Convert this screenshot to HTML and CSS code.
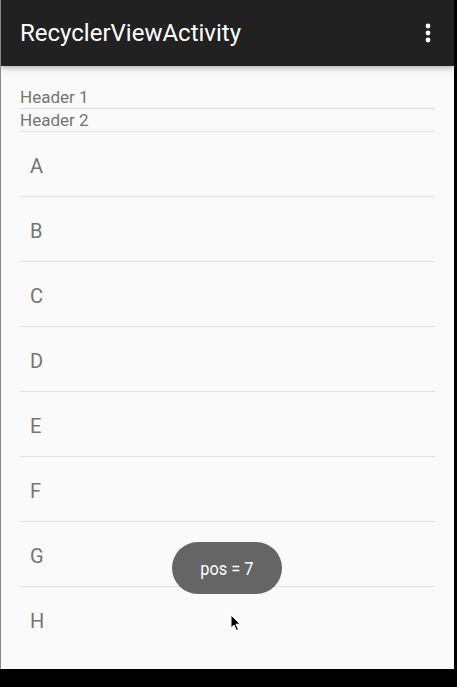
FILE: index.html
```html
<!DOCTYPE html>
<html>
<head>
  <title>RecyclerViewActivity</title>
  <link rel="stylesheet" href="styles.css">
</head>
<body>

  <div class="screen">
    <!-- ACTION BAR -->
    <div class="toolbar">
      <span class="title">RecyclerViewActivity</span>
      <svg class="overflow" width="8" height="22" viewBox="0 0 8 22">
        <circle cx="4" cy="4" r="2.4" fill="#fff"/>
        <circle cx="4" cy="11" r="2.4" fill="#fff"/>
        <circle cx="4" cy="18" r="2.4" fill="#fff"/>
      </svg>
    </div>

    <!-- LIST -->
    <div class="list">
      <div class="header">Header 1</div>
      <div class="header last">Header 2</div>
      <div class="item">A</div>
      <div class="item">B</div>
      <div class="item">C</div>
      <div class="item">D</div>
      <div class="item">E</div>
      <div class="item">F</div>
      <div class="item">G</div>
      <div class="item">H</div>
    </div>

    <div class="toast"><span>pos = 7</span></div>

    <svg class="cursor" width="12" height="18" viewBox="0 0 12 18">
      <path d="M1 1 L1 14 L4 11 L6.5 16.5 L8.5 15.6 L6 10.2 L10.3 10.2 Z" fill="#000" stroke="#fff" stroke-width="1"/>
    </svg>
  </div>

</body>
</html>
```

FILE: styles.css
```css
body {
  margin: 0;
  background: #000;
  font-family: Roboto, "Liberation Sans", sans-serif;
}
.screen {
  position: relative;
  width: 453px;
  height: 669px;
  border-left: 1px solid #8a8a8a;
  background: #fafafa;
  overflow: hidden;
}
.toolbar {
  position: relative;
  z-index: 1;
  height: 66px;
  background: #212121;
  display: flex;
  align-items: center;
  justify-content: space-between;
  padding: 0 22px 0 19px;
  box-shadow: 0 2px 6px rgba(0, 0, 0, 0.3);
}
.title {
  color: #fff;
  font-size: 24px;
}
.overflow {
  display: block;
  margin-top: -1px;
}
.list {
  padding: 20px 19px 0;
}
.header {
  height: 22px;
  line-height: 22px;
  font-size: 17px;
  color: #757575;
  border-bottom: 1px solid #dcdcdc;
}
.header.last {
  border-bottom: 1px solid #e3e3e3;
}
.item {
  height: 59px;
  padding: 5px 0 0 10px;
  line-height: 59px;
  font-size: 20px;
  color: #757575;
  border-bottom: 1px solid #e0e0e0;
}
.item:last-child {
  border-bottom: none;
}
.toast {
  position: absolute;
  left: 171px;
  top: 542px;
  width: 110px;
  height: 52px;
  border-radius: 26px;
  background: #656565;
  color: #fff;
  font-size: 19px;
  display: flex;
  align-items: center;
  justify-content: center;
}
.toast span {
  display: inline-block;
  transform: scaleX(0.86);
}
.cursor {
  position: absolute;
  left: 229px;
  top: 614px;
}
```
